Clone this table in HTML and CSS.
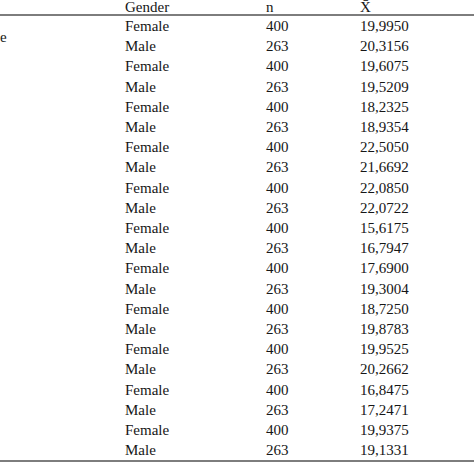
FILE: index.html
```html
<!DOCTYPE html>
<html>
<head>
<meta charset="utf-8">
<link rel="stylesheet" href="styles.css">
</head>
<body>
<table class="data">
  <colgroup>
    <col class="c-group">
    <col class="c-gender">
    <col class="c-n">
    <col class="c-mean">
  </colgroup>
  <thead>
    <tr class="head-row">
      <th></th>
      <th>Gender</th>
      <th>n</th>
      <th>X̄</th>
    </tr>
  </thead>
  <tbody>
    <tr><td rowspan="2" class="group"><span class="clip">e</span></td><td>Female</td><td>400</td><td>19,9950</td></tr>
    <tr><td>Male</td><td>263</td><td>20,3156</td></tr>
    <tr><td></td><td>Female</td><td>400</td><td>19,6075</td></tr>
    <tr><td></td><td>Male</td><td>263</td><td>19,5209</td></tr>
    <tr><td></td><td>Female</td><td>400</td><td>18,2325</td></tr>
    <tr><td></td><td>Male</td><td>263</td><td>18,9354</td></tr>
    <tr><td></td><td>Female</td><td>400</td><td>22,5050</td></tr>
    <tr><td></td><td>Male</td><td>263</td><td>21,6692</td></tr>
    <tr><td></td><td>Female</td><td>400</td><td>22,0850</td></tr>
    <tr><td></td><td>Male</td><td>263</td><td>22,0722</td></tr>
    <tr><td></td><td>Female</td><td>400</td><td>15,6175</td></tr>
    <tr><td></td><td>Male</td><td>263</td><td>16,7947</td></tr>
    <tr><td></td><td>Female</td><td>400</td><td>17,6900</td></tr>
    <tr><td></td><td>Male</td><td>263</td><td>19,3004</td></tr>
    <tr><td></td><td>Female</td><td>400</td><td>18,7250</td></tr>
    <tr><td></td><td>Male</td><td>263</td><td>19,8783</td></tr>
    <tr><td></td><td>Female</td><td>400</td><td>19,9525</td></tr>
    <tr><td></td><td>Male</td><td>263</td><td>20,2662</td></tr>
    <tr><td></td><td>Female</td><td>400</td><td>16,8475</td></tr>
    <tr><td></td><td>Male</td><td>263</td><td>17,2471</td></tr>
    <tr><td></td><td>Female</td><td>400</td><td>19,9375</td></tr>
    <tr><td></td><td>Male</td><td>263</td><td>19,1331</td></tr>
  </tbody>
</table>
</body>
</html>
```
FILE: styles.css
```css
html, body {
  margin: 0;
  padding: 0;
  background: #ffffff;
}

body {
  font-family: "Liberation Serif", "Times New Roman", serif;
  font-size: 15px;
  color: #161616;
  overflow: hidden;
}

.data {
  width: 100%;
  border-collapse: collapse;
  table-layout: fixed;
  border-bottom: 2px solid #7d7d7d;
}

.c-group { width: 125px; }
.c-gender { width: 141px; }
.c-n { width: 94px; }
.c-mean { width: auto; }

.data th,
.data td {
  padding: 0;
  text-align: left;
  font-weight: normal;
  white-space: nowrap;
}

.head-row th {
  line-height: 14px;
  height: 14px;
  border-bottom: 2px solid #7d7d7d;
}

.data tbody td {
  line-height: 20.2px;
  height: 20.2px;
}

.data td.group {
  vertical-align: middle;
  padding-top: 2px;
}

.clip {
  margin-left: 0;
}
```
